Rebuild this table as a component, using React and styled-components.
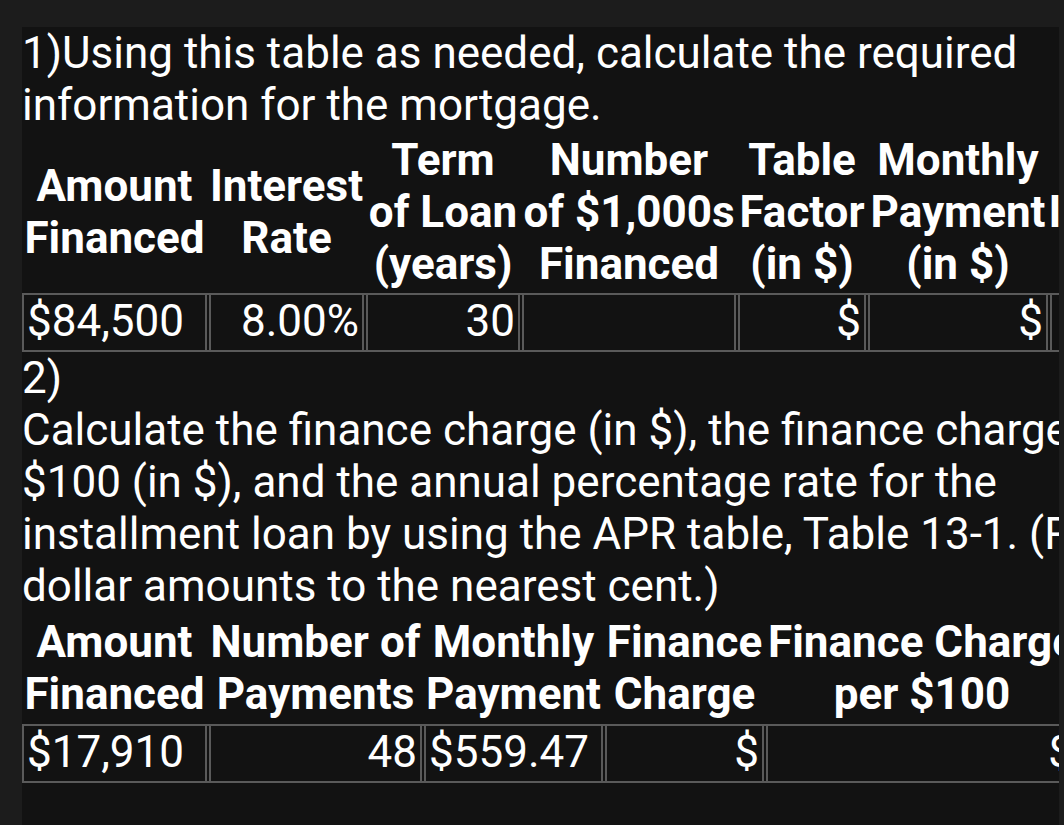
import React from "react";
import styled, { createGlobalStyle } from "styled-components";

const GlobalStyle = createGlobalStyle`
  html, body {
    margin: 0;
    padding: 0;
    background: #1c1c1c;
  }
  * { box-sizing: border-box; }
`;

const Page = styled.div`
  padding: 27px 0 0 22px;
  min-height: 100vh;
`;

const Panel = styled.main`
  width: 1037px;
  min-height: calc(100vh - 27px);
  background: #121212;
  overflow: hidden;
  color: #ffffff;
  font-family: Roboto, "Noto Sans", sans-serif;
  font-size: 44px;
  line-height: 52px;
`;

const Content = styled.div`
  width: 1400px;
`;

const Text = styled.p`
  margin: 0;
  white-space: nowrap;
`;

const HeadRow = styled.div`
  display: grid;
  grid-template-columns: ${(p) => p.$cols};
  column-gap: 2px;
  align-items: center;
  padding: ${(p) => p.$pad};
`;

const HeadCell = styled.div`
  display: flex;
  flex-direction: column;
  align-items: center;
  font-weight: 700;
  white-space: nowrap;
`;

const BodyRow = styled.div`
  display: grid;
  grid-template-columns: ${(p) => p.$cols};
  column-gap: 2px;
  border-top: 2px solid #5a5a5a;
  border-bottom: 2px solid #5a5a5a;
`;

const BodyCell = styled.div`
  border-left: 2px solid #5a5a5a;
  border-right: 2px solid #5a5a5a;
  padding: 0 3px 3px;
  text-align: ${(p) => p.$align};
  white-space: nowrap;
  overflow: hidden;
`;

const mortgage = {
  cols: "185px 155px 154px 214px 128px 180px 150px",
  pad: "3px 0 3px",
  heads: [
    ["Amount", "Financed"],
    ["Interest", "Rate"],
    ["Term", "of Loan", "(years)"],
    ["Number", "of $1,000s", "Financed"],
    ["Table", "Factor", "(in $)"],
    ["Monthly", "Payment", "(in $)"],
    ["Total", "Interest", "(in $)"],
  ],
  row: [
    ["$84,500", "left"],
    ["8.00%", "right"],
    ["30", "right"],
    ["", "right"],
    ["$", "right"],
    ["$", "right"],
    ["$", "right"],
  ],
};

const loan = {
  cols: "185px 213px 179px 159px 312px 200px",
  pad: "4px 0 4px",
  heads: [
    ["Amount", "Financed"],
    ["Number of", "Payments"],
    ["Monthly", "Payment"],
    ["Finance", "Charge"],
    ["Finance Charge", "per $100"],
    ["APR"],
  ],
  row: [
    ["$17,910", "left"],
    ["48", "right"],
    ["$559.47", "left"],
    ["$", "right"],
    ["$", "right"],
    ["", "right"],
  ],
};

function DataTable({ data }) {
  return (
    <div>
      <HeadRow $cols={data.cols} $pad={data.pad}>
        {data.heads.map((lines, i) => (
          <HeadCell key={i}>
            {lines.map((l, j) => (
              <span key={j}>{l}</span>
            ))}
          </HeadCell>
        ))}
      </HeadRow>
      <BodyRow $cols={data.cols}>
        {data.row.map(([text, align], i) => (
          <BodyCell key={i} $align={align}>
            {text || "\u00a0"}
          </BodyCell>
        ))}
      </BodyRow>
    </div>
  );
}

export default function App() {
  return (
    <>
      <GlobalStyle />
      <Page>
        <Panel>
          <Content>
            <Text>
              1)Using this table as needed, calculate the required
              <br />
              information for the mortgage.
            </Text>
            <DataTable data={mortgage} />
            <Text>2)</Text>
            <Text>
              Calculate the finance charge (in $), the finance charge per
              <br />
              $100 (in $), and the annual percentage rate for the
              <br />
              installment loan by using the APR table, Table 13-1. (Round all
              <br />
              dollar amounts to the nearest cent.)
            </Text>
            <DataTable data={loan} />
          </Content>
        </Panel>
      </Page>
    </>
  );
}
